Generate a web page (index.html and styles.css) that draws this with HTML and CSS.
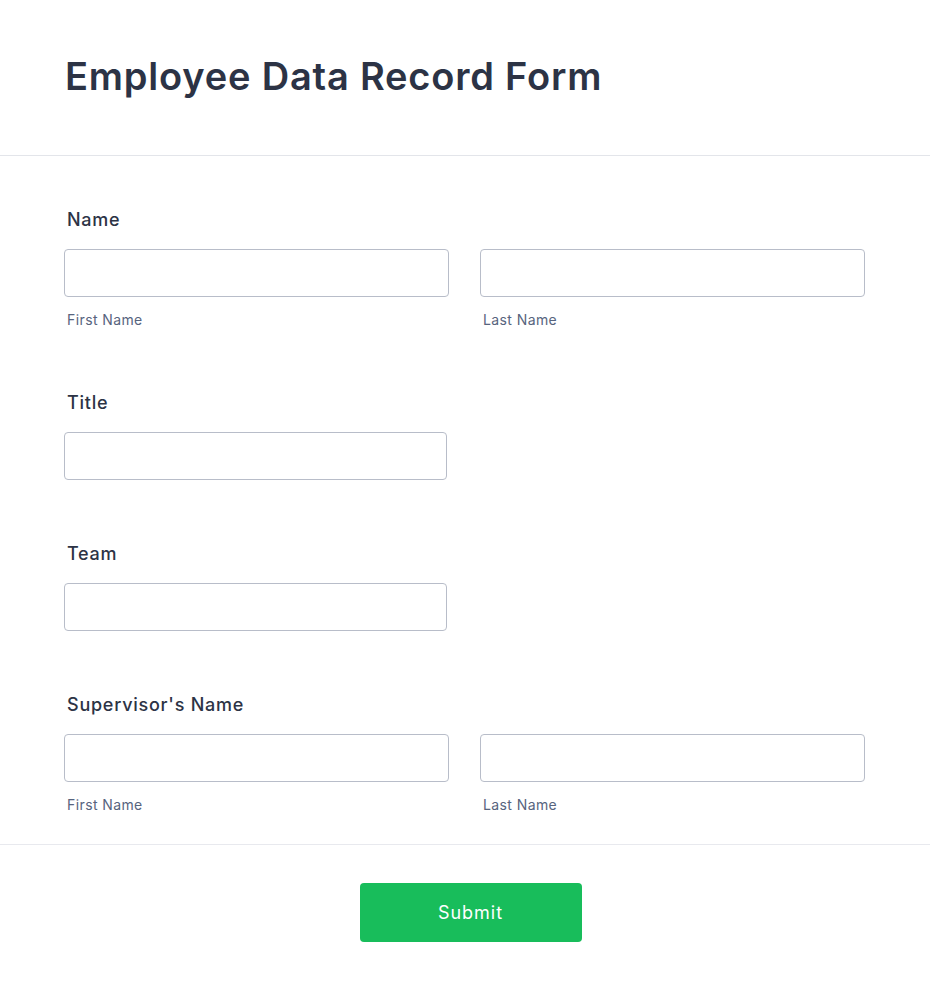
FILE: index.html
```html
<!DOCTYPE html>
<html lang="en">
<head>
<meta charset="utf-8">
<title>Employee Data Record Form</title>
<link rel="stylesheet" href="styles.css">
</head>
<body>
<div class="card">
  <header class="form-header">
    <h1 class="form-title">Employee Data Record Form</h1>
  </header>
  <form class="form-body">
    <div class="field">
      <label class="field-label">Name</label>
      <div class="split">
        <div class="sub">
          <input class="text-input" type="text">
          <span class="sublabel">First Name</span>
        </div>
        <div class="sub">
          <input class="text-input" type="text">
          <span class="sublabel">Last Name</span>
        </div>
      </div>
    </div>
    <div class="field">
      <label class="field-label">Title</label>
      <input class="text-input single" type="text">
    </div>
    <div class="field">
      <label class="field-label">Team</label>
      <input class="text-input single" type="text">
    </div>
    <div class="field">
      <label class="field-label">Supervisor's Name</label>
      <div class="split">
        <div class="sub">
          <input class="text-input" type="text">
          <span class="sublabel">First Name</span>
        </div>
        <div class="sub">
          <input class="text-input" type="text">
          <span class="sublabel">Last Name</span>
        </div>
      </div>
    </div>
  </form>
  <footer class="form-footer">
    <button class="submit-btn" type="button">Submit</button>
  </footer>
</div>
</body>
</html>
```

FILE: styles.css
```css
* { box-sizing: border-box; }

html, body {
  margin: 0;
  padding: 0;
  background: #ffffff;
}

body {
  font-family: Inter, "Noto Sans", "Liberation Sans", sans-serif;
  color: #2c3345;
}

.card {
  width: 930px;
  min-height: 992px;
  background: #ffffff;
}

.form-header {
  height: 156px;
  border-bottom: 1px solid #e3e5ea;
  padding: 50px 0 0 65px;
}

.form-title {
  margin: 0;
  font-size: 38px;
  line-height: 52px;
  font-weight: 600;
  color: #2c3345;
  letter-spacing: 0.8px;
}

.form-body {
  padding: 52px 65px 30px 64px;
  display: flex;
  flex-direction: column;
  gap: 62px;
}

.field {
  display: flex;
  flex-direction: column;
}

.field-label {
  display: block;
  font-size: 18px;
  line-height: 24px;
  font-weight: 500;
  color: #2c3345;
  letter-spacing: 0.75px;
  padding-left: 3px;
  margin-bottom: 17px;
}

.split {
  display: grid;
  grid-template-columns: 385px 385px;
  column-gap: 31px;
}

.sub {
  display: flex;
  flex-direction: column;
}

.text-input {
  display: block;
  width: 100%;
  height: 48px;
  border: 1px solid #b8bdc9;
  border-radius: 4px;
  background: #ffffff;
  margin: 0;
  padding: 0 10px;
  font: inherit;
}

.text-input.single {
  width: 383px;
}

.sublabel {
  display: block;
  margin-top: 14px;
  padding-left: 3px;
  font-size: 14px;
  line-height: 18px;
  letter-spacing: 0.4px;
  color: #57647e;
}

.form-footer {
  border-top: 1px solid #e8e9ee;
  padding: 38px 0 50px;
  display: flex;
  justify-content: center;
}

.submit-btn {
  width: 222px;
  height: 59px;
  border: none;
  border-radius: 4px;
  background: #18bd5b;
  color: #ffffff;
  font-family: inherit;
  font-size: 18px;
  font-weight: 400;
  letter-spacing: 1px;
  margin-left: 11px;
  cursor: pointer;
}
```
